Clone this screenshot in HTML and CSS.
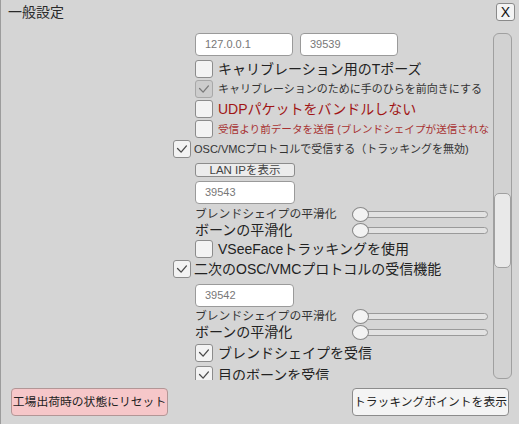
FILE: index.html
```html
<!DOCTYPE html>
<html lang="ja">
<head>
<meta charset="utf-8">
<link rel="stylesheet" href="styles.css">
</head>
<body>
<div class="window">
  <div class="header">
    <div class="title">一般設定</div>
    <div class="close">X</div>
  </div>
  <div class="main">
    <div class="scroll">
      <div class="content">
        <div class="row fields indent">
          <div class="field w98">127.0.0.1</div>
          <div class="field w98">39539</div>
        </div>
        <div class="row cb indent first">
          <span class="box"></span><span class="lbl big">キャリブレーション用のTポーズ</span>
        </div>
        <div class="row cb indent">
          <span class="box disabled checked"><svg viewBox="0 0 18 18"><path d="M4 8.5 L8 12.5 L14 5.5"/></svg></span><span class="lbl small">キャリブレーションのために手のひらを前向きにする</span>
        </div>
        <div class="row cb indent">
          <span class="box"></span><span class="lbl big red">UDPパケットをバンドルしない</span>
        </div>
        <div class="row cb indent">
          <span class="box"></span><span class="lbl small red narrow">受信より前データを送信 (ブレンドシェイプが送信されな</span>
        </div>
        <div class="row cb">
          <span class="box checked"><svg viewBox="0 0 18 18"><path d="M4 8.5 L8 12.5 L14 5.5"/></svg></span><span class="lbl small tight">OSC/VMCプロトコルで受信する（トラッキングを無効)</span>
        </div>
        <div class="row indent btnrow">
          <div class="smallbtn">LAN IPを表示</div>
        </div>
        <div class="row indent fieldrow">
          <div class="field w100">39543</div>
        </div>
        <div class="row indent slider first-slider">
          <span class="slbl small">ブレンドシェイプの平滑化</span>
          <span class="track"><span class="thumb"></span></span>
        </div>
        <div class="row indent slider">
          <span class="slbl big">ボーンの平滑化</span>
          <span class="track"><span class="thumb"></span></span>
        </div>
        <div class="row cb indent after-slider">
          <span class="box"></span><span class="lbl big">VSeeFaceトラッキングを使用</span>
        </div>
        <div class="row cb">
          <span class="box checked"><svg viewBox="0 0 18 18"><path d="M4 8.5 L8 12.5 L14 5.5"/></svg></span><span class="lbl big tight">二次のOSC/VMCプロトコルの受信機能</span>
        </div>
        <div class="row indent fieldrow2">
          <div class="field w99">39542</div>
        </div>
        <div class="row indent slider first-slider2">
          <span class="slbl small">ブレンドシェイプの平滑化</span>
          <span class="track"><span class="thumb"></span></span>
        </div>
        <div class="row indent slider">
          <span class="slbl big">ボーンの平滑化</span>
          <span class="track"><span class="thumb"></span></span>
        </div>
        <div class="row cb indent after-slider2">
          <span class="box checked"><svg viewBox="0 0 18 18"><path d="M4 8.5 L8 12.5 L14 5.5"/></svg></span><span class="lbl big">ブレンドシェイプを受信</span>
        </div>
        <div class="row cb indent last">
          <span class="box checked"><svg viewBox="0 0 18 18"><path d="M4 8.5 L8 12.5 L14 5.5"/></svg></span><span class="lbl big">目のボーンを受信</span>
        </div>
      </div>
    </div>
    <div class="scrollbar"><div class="sthumb"></div></div>
  </div>
  <div class="footer">
    <div class="fbtn reset">工場出荷時の状態にリセット</div>
    <div class="fbtn">トラッキングポイントを表示</div>
  </div>
</div>
</body>
</html>
```

FILE: styles.css
```css
* { box-sizing: border-box; }
html, body { margin: 0; padding: 0; }
body {
  font-family: "Liberation Sans", "Noto Sans CJK JP", sans-serif;
  color: #222;
  background: #d5d5d5;
}
.window {
  width: 519px;
  height: 424px;
  background: #d5d5d5;
  border-left: 1px solid #9c9c9c;
  display: flex;
  flex-direction: column;
  overflow: hidden;
}
.header {
  height: 33px;
  display: flex;
  justify-content: space-between;
  align-items: flex-start;
  padding: 3px 4px 0 7px;
}
.title {
  font-size: 14px;
  line-height: 18px;
  color: #2a2a2a;
}
.close {
  width: 19px;
  height: 18px;
  border: 1px solid #8a8a8a;
  border-radius: 3px;
  background: #f4f4f4;
  font-size: 14px;
  line-height: 16px;
  text-align: center;
  color: #111;
}
.main {
  height: 347px;
  display: flex;
}
.scroll {
  width: 492px;
  overflow: hidden;
  padding-left: 172px;
}
.content { display: flex; flex-direction: column; }
.row { display: flex; align-items: center; flex-shrink: 0; }
.indent { padding-left: 22px; }
.fields { height: 23px; gap: 7px; }
.field {
  height: 23px;
  background: #fff;
  border: 1px solid #9a9a9a;
  border-radius: 4px;
  font-size: 11px;
  line-height: 21px;
  color: #777;
  padding-left: 9px;
}
.w98 { width: 98px; }
.w100 { width: 100px; }
.w99 { width: 99px; }
.cb { height: 20px; }
.first { margin-top: 3px; }
.box {
  width: 18px;
  height: 18px;
  flex-shrink: 0;
  border: 1px solid #8c8c8c;
  border-radius: 3px;
  background: #f3f3f3;
  display: flex;
  align-items: center;
  justify-content: center;
}
.box svg { width: 18px; height: 18px; }
.box svg path { fill: none; stroke: #4a4a4a; stroke-width: 1.5; stroke-linecap: round; stroke-linejoin: round; }
.box.disabled { background: #cdcdcd; border-color: #a8a8a8; }
.box.disabled svg path { stroke: #7a7a7a; }
.lbl { margin-left: 5px; white-space: nowrap; }
.lbl.tight { margin-left: 3px; }
.big { font-size: 14px; line-height: 18px; color: #222; }
.small { font-size: 11px; line-height: 14px; color: #333; }
.narrow { font-size: 10.6px; }
.red { color: #a01414; }
.small.red { color: #a83232; }
.btnrow { margin-top: 4px; height: 14px; }
.smallbtn {
  width: 100px;
  height: 14px;
  border: 1px solid #8c8c8c;
  border-radius: 3px;
  background: #ececec;
  font-size: 11.5px;
  line-height: 12px;
  text-align: center;
  color: #444;
}
.fieldrow { margin-top: 4px; height: 23px; }
.fieldrow2 { margin-top: 5px; height: 23px; }
.slider { height: 16px; }
.first-slider { margin-top: 2px; }
.first-slider2 { margin-top: 1px; }
.slbl { width: 157px; white-space: nowrap; }
.slbl.small { font-size: 11.8px; }
.track {
  position: relative;
  width: 136px;
  height: 7px;
  background: #e2e2e2;
  border: 1px solid #9a9a9a;
  border-radius: 4px;
}
.thumb {
  position: absolute;
  left: -1px;
  top: -5px;
  width: 17px;
  height: 15px;
  border-radius: 50%;
  background: #f3f3f3;
  border: 1px solid #8a8a8a;
}
.after-slider { margin-top: 1px; }
.after-slider2 { margin-top: 3px; }
.last { margin-top: 2px; }
.scrollbar {
  width: 19px;
  height: 346px;
  border: 1px solid #a0a0a0;
  border-radius: 6px;
  background: #d2d2d2;
  padding-top: 159px;
}
.sthumb {
  width: 17px;
  height: 75px;
  background: #e9e9e9;
  border: 1px solid #a0a0a0;
  border-radius: 5px;
}
.footer {
  margin-top: 8px;
  display: flex;
  justify-content: space-between;
  padding: 0 10px 0 10px;
}
.fbtn {
  width: 157px;
  height: 28px;
  border: 1px solid #8c8c8c;
  border-radius: 4px;
  background: #f4f4f4;
  font-size: 11.8px;
  line-height: 26px;
  display: flex;
  justify-content: center;
  white-space: nowrap;
  color: #222;
}
.fbtn.reset { background: #f6c7c9; border-color: #b29696; }
```
